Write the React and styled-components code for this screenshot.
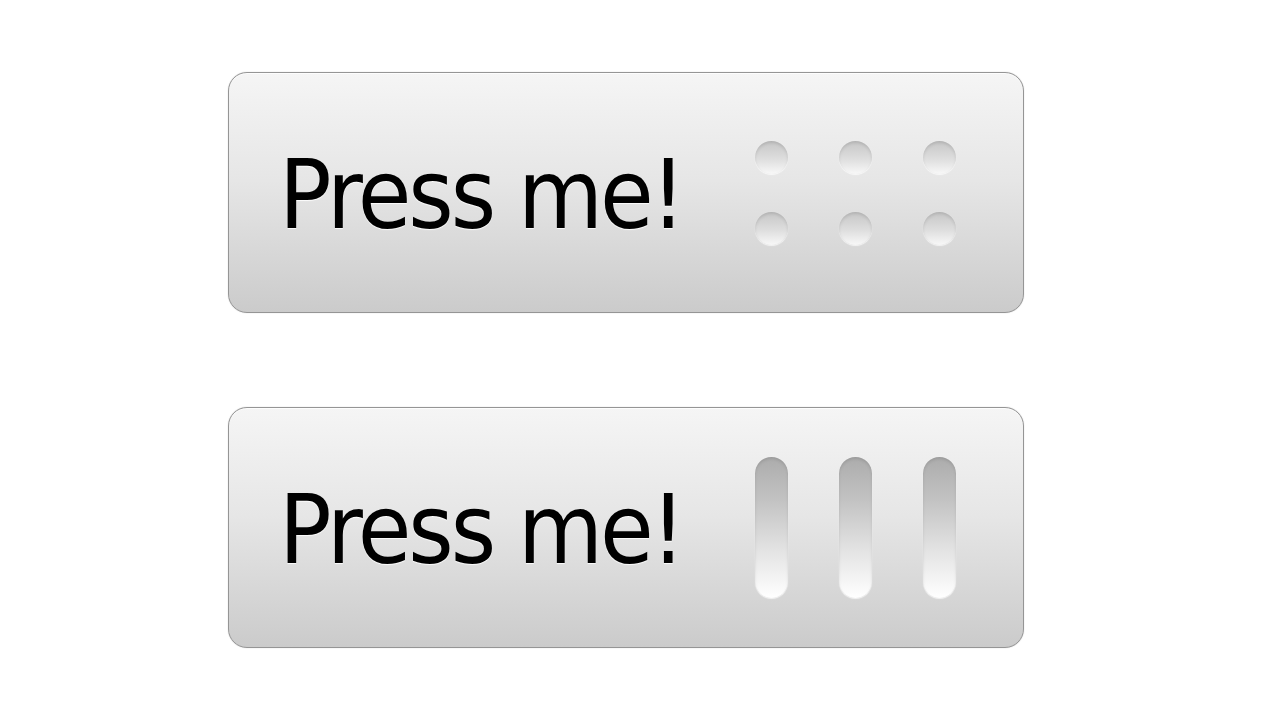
import React from 'react';
import styled, { createGlobalStyle } from 'styled-components';

const Global = createGlobalStyle`
  html, body {
    margin: 0;
    background: #ffffff;
  }
`;

const Page = styled.div`
  width: 1278px;
  height: 718px;
  box-sizing: border-box;
  padding: 72px 0 0 228px;
  display: flex;
  flex-direction: column;
  gap: 94px;
`;

const Button = styled.button`
  width: 796px;
  height: 241px;
  box-sizing: border-box;
  border: 1px solid #959595;
  border-radius: 19px;
  background: linear-gradient(to bottom, #f5f5f5 0%, #e6e6e6 45%, #cbcbcb 100%);
  box-shadow: inset 0 1px 0 #fdfdfd, 0 0 1px rgba(0, 0, 0, 0.3);
  display: flex;
  align-items: center;
  justify-content: space-between;
  padding: 0 67px 0 50px;
  cursor: pointer;
`;

const Label = styled.span`
  font-family: "DejaVu Sans Condensed", "DejaVu Sans", sans-serif;
  font-stretch: condensed;
  font-size: 97px;
  letter-spacing: -3px;
  color: #000;
  line-height: 1;
  padding-top: 4px;
  text-shadow: 0 1px 1px rgba(255, 255, 255, 0.9);
`;

const Grip = styled.div`
  display: grid;
  grid-template-columns: repeat(3, 33px);
  column-gap: 51px;
  row-gap: ${p => p.$rowGap}px;
`;

const Dot = styled.span`
  width: 33px;
  height: 33px;
  border-radius: 50%;
  background: linear-gradient(to bottom, #c6c6c6 0%, #dedede 55%, #f8f8f8 100%);
  box-shadow: inset 0 2px 3px rgba(0, 0, 0, 0.1), 0 1px 1px rgba(255, 255, 255, 0.7);
`;

const Bar = styled.span`
  width: 33px;
  height: 141px;
  border-radius: 17px;
  background: linear-gradient(to bottom, #acacac 0%, #c2c2c2 30%, #e2e2e2 65%, #ffffff 100%);
  box-shadow: inset 0 2px 3px rgba(0, 0, 0, 0.1), 0 1px 1px rgba(255, 255, 255, 0.7);
`;

export default function App() {
  return (
    <>
      <Global />
      <Page>
        <Button>
          <Label>Press me!</Label>
          <Grip $rowGap={38}>
            {[0, 1, 2, 3, 4, 5].map(i => <Dot key={i} />)}
          </Grip>
        </Button>
        <Button>
          <Label>Press me!</Label>
          <Grip $rowGap={0}>
            {[0, 1, 2].map(i => <Bar key={i} />)}
          </Grip>
        </Button>
      </Page>
    </>
  );
}
